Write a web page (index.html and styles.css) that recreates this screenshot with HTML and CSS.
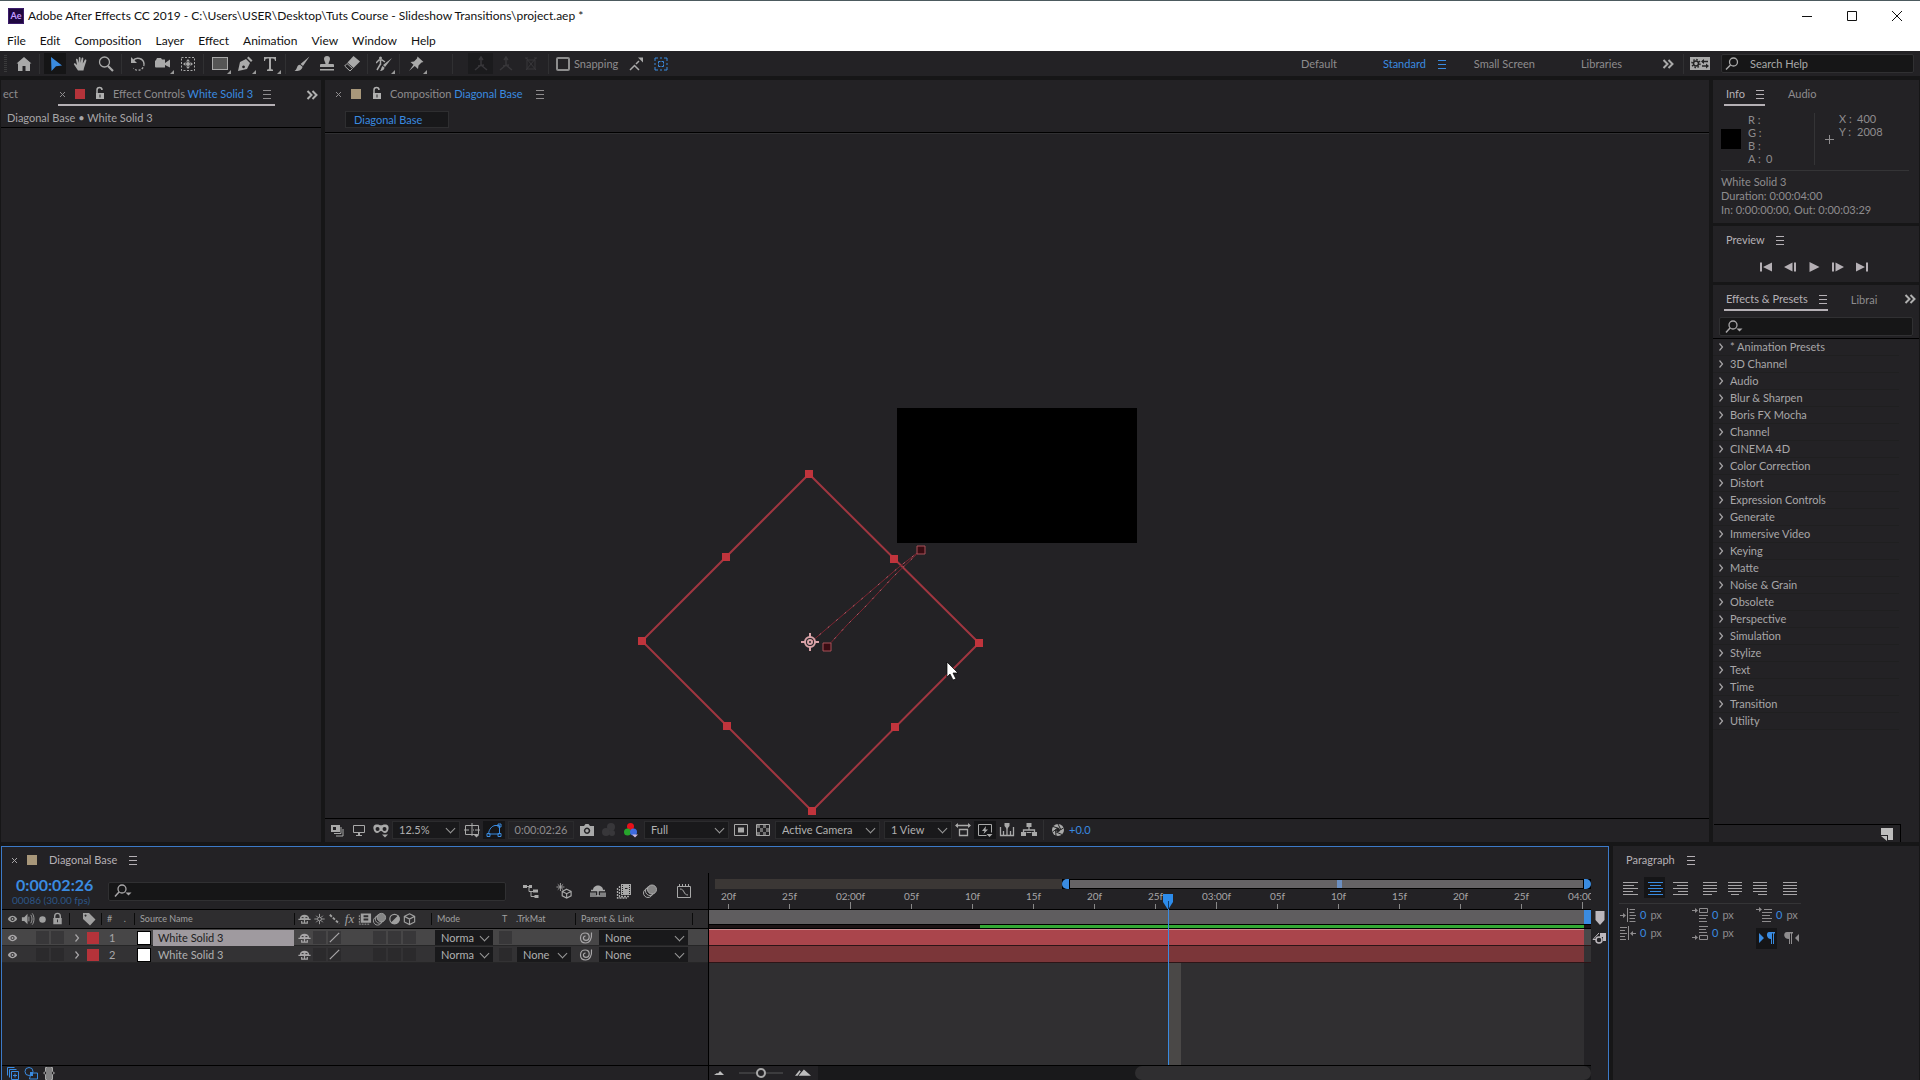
FILE: index.html
```html
<!DOCTYPE html>
<html lang="en">
<head>
<meta charset="utf-8">
<title>Adobe After Effects CC 2019</title>
<link rel="stylesheet" href="styles.css">
</head>
<body>
<svg class="sprite" aria-hidden="true">
  <symbol id="menu" viewBox="0 0 16 16"><path d="M4 4.5h8M4 8.5h8M4 12.5h8" stroke="currentColor"/></symbol>
  <symbol id="more" viewBox="0 0 16 16"><path d="M3.500 4l4 4-4 4M8.500 4l4 4-4 4" fill="none" stroke="currentColor" stroke-width="2"/></symbol>
  <symbol id="close" viewBox="0 0 16 16"><path d="M6 6l5 5M11 6l-5 5" stroke="currentColor"/></symbol>
  <symbol id="unlock" viewBox="0 0 16 16"><path d="M5 7V4a2.500 2.500 0 0 1 5 0" fill="none" stroke="currentColor" stroke-width="1.500"/><path fill-rule="evenodd" d="M4 7h8v6H4zM7.500 8.500v3h1v-3z"/></symbol>
  <symbol id="lock" viewBox="0 0 16 16"><path d="M5 8V5a3 3 0 0 1 6 0v3" fill="none" stroke="currentColor" stroke-width="1.500"/><path fill-rule="evenodd" d="M3.500 7h9v6.500h-9zM7.500 8.500v3h1v-3z"/></symbol>
  <symbol id="home" viewBox="0 0 16 16"><path d="M8 1l7.500 6.500H14V15H9.500v-5h-3v5H2V7.500H.5z"/></symbol>
  <symbol id="select" viewBox="0 0 16 16"><path d="M3 1l11 8.500-6 .8L3.500 15z"/></symbol>
  <symbol id="hand" viewBox="0 0 16 16"><path d="M5 14.500L1 8.500c-.6-1 .8-1.800 1.600-.8L4 9 3 3.800c-.2-1.200 1.400-1.500 1.700-.3L5.800 7V2c0-1.200 1.700-1.200 1.700 0v5L8.600 2.300c.3-1.200 1.900-.8 1.700.4L9.800 7.500l1.900-3.400c.6-1 2-.3 1.600.8L11 12l-.5 2.500z"/></symbol>
  <symbol id="zoom" viewBox="0 0 16 16"><circle cx="6.500" cy="6" r="5" fill="none" stroke="currentColor" stroke-width="1.300"/><path d="M10 10l5 5" stroke="currentColor" stroke-width="2.200"/></symbol>
  <symbol id="rotate" viewBox="0 0 16 16"><path d="M3 5a6 6 0 0 1 11 3" fill="none" stroke="currentColor" stroke-width="1.500"/><path d="M14 8a6 6 0 0 1-10.500 4.200" fill="none" stroke="currentColor" stroke-width="1.300" stroke-dasharray="2 1.500"/><path d="M1 1v6h6z"/></symbol>
  <symbol id="camera" viewBox="0 0 16 16"><path d="M1 4l1-2h4l1 1.500h3V7l5-3.500v8L10 9v2.500H1a1 1 0 0 1-1-1V5z"/></symbol>
  <symbol id="anchor" viewBox="0 0 16 16"><rect x="1.500" y="1.500" width="13" height="13" fill="none" stroke="currentColor" stroke-dasharray="2 1.500"/><path d="M8 3l2 2.500H6zM8 13l2-2.500H6zM3 8l2.500-2v4zM13 8l-2.500-2v4z"/><circle cx="8" cy="8" r="2"/></symbol>
  <symbol id="rect" viewBox="0 0 16 16"><rect x=".5" y="1.500" width="15" height="12" fill="#555" stroke="currentColor"/></symbol>
  <symbol id="pen" viewBox="0 0 16 16"><path fill-rule="evenodd" d="M1 15l2-9 6-3 4 4-3 6-9 2zM6.500 9.500a1.400 1.400 0 1 0 .1 0z"/><path d="M10 2l1.500-1.500 4 4L14 6z"/></symbol>
  <symbol id="type" viewBox="0 0 16 16"><path d="M2 1h12v4h-1c-.3-1.800-.8-2.500-2.500-2.500H9V12c0 1.200.5 1.500 2 1.600V15H5v-1.400c1.500-.1 2-.4 2-1.600V2.500H5.500C3.800 2.500 3.300 3.200 3 5H2z"/></symbol>
  <symbol id="brush" viewBox="0 0 16 16"><path d="M15.500.5L9 10 6.500 8zM6 8.800l2.500 2C8.300 14 4.500 15.500.5 15c2-1.400 2-2.500 2.700-4C3.700 9.600 4.800 8.700 6 8.800z"/></symbol>
  <symbol id="stamp" viewBox="0 0 16 16"><path d="M8 0a3 3 0 0 1 3 3c0 2-1.500 3-1.500 5H14a1 1 0 0 1 1 1v2H1V9a1 1 0 0 1 1-1h4.500c0-2-1.500-3-1.500-5a3 3 0 0 1 3-3zM1 13h14v1.500H1z"/></symbol>
  <symbol id="eraser" viewBox="0 0 16 16"><path d="M9.500 0L16 5.500 9.500 12 3.500 6.500z"/><path d="M3 7.500L8.500 12.500 6 15 .7 10z" fill="none" stroke="currentColor"/></symbol>
  <symbol id="roto" viewBox="0 0 16 16"><path d="M16 2L9 11 7 9zM6.500 10l2 1.500c0 2-2 3.500-4.500 3.500 1-1 1.500-4 2.500-5z"/><circle cx="4.500" cy="2" r="1.500"/><path d="M0 7l3-3h3l3 2M4.500 4v5M4.500 8L1 14" fill="none" stroke="currentColor" stroke-width="1.500"/></symbol>
  <symbol id="pin" viewBox="0 0 16 16"><path d="M9.500.5L15.500 6l-2 .5-3 3L10 13l-3.200-3L1 15l4.500-6.200L2.500 6 6 5.500l3-3z"/></symbol>
  <symbol id="axis" viewBox="0 0 16 16"><path d="M8 2v7L2 14M8 9l6 5M6 4l2-3 2 3M5 10l6-1" fill="none" stroke="currentColor" stroke-width="1.500"/></symbol>
  <symbol id="axisbox" viewBox="0 0 16 16"><path d="M3 2l10 12M3 14L13 2M4 4v9h8V4zM2 2h3M11 2h3" fill="none" stroke="currentColor"/></symbol>
  <symbol id="snap" viewBox="0 0 16 16"><path d="M2 14l4.500-4.500L11 14M8 8l3-3" fill="none" stroke="currentColor" stroke-width="1.500"/><path d="M10 1.500h5v5z"/></symbol>
  <symbol id="snapbox" viewBox="0 0 16 16"><path d="M2 5V2h3M11 2h3v3M14 11v3h-3M5 14H2v-3M7 2h2M7 14h2M2 7v2M14 7v2" fill="none" stroke="currentColor"/><path d="M5.500 7.500v-2h2M8.500 5.500h2v2M10.500 8.500v2h-2M7.500 10.500h-2v-2" fill="none" stroke="currentColor"/></symbol>
  <symbol id="settings" viewBox="0 0 20 14"><path d="M0 0h20v13H0z"/><circle cx="6" cy="6.500" r="2.500" fill="none" stroke="#232324" stroke-width="1.500"/><circle cx="6" cy="6.500" r="4" fill="none" stroke="#232324" stroke-width="1.500" stroke-dasharray="1.500 1.600"/><path d="M12 4.500h6M12 9h6" stroke="#232324" stroke-width="1.500"/><path d="M14 2v5l-3-2.500zM16 6.500v5L19 9z" fill="#232324"/></symbol>
  <symbol id="find" viewBox="0 0 16 16"><circle cx="9.500" cy="6" r="4" fill="none" stroke="currentColor" stroke-width="1.300"/><path d="M6.500 9L2 13.500" stroke="currentColor" stroke-width="1.500"/></symbol>
  <symbol id="finddrop" viewBox="0 0 18 16"><circle cx="8" cy="6" r="4" fill="none" stroke="currentColor" stroke-width="1.300"/><path d="M5 9L1 13.500" stroke="currentColor" stroke-width="1.500"/><path d="M11.500 9.500h6l-3 3z"/></symbol>
  <symbol id="first" viewBox="0 0 16 16"><path d="M2 3.500h2v9H2zM14 3.500v9L5 8z"/></symbol>
  <symbol id="back" viewBox="0 0 16 16"><path d="M12 3.500h2v9h-2zM10.500 3.500v9L2 8z"/></symbol>
  <symbol id="play" viewBox="0 0 16 16"><path d="M3.500 3l10 5-10 5z"/></symbol>
  <symbol id="fwd" viewBox="0 0 16 16"><path d="M2 3.500h2v9H2zM5.500 3.500v9L14 8z"/></symbol>
  <symbol id="last" viewBox="0 0 16 16"><path d="M12 3.500h2v9h-2zM2 3.500v9L11 8z"/></symbol>
  <symbol id="chev" viewBox="0 0 16 16"><path d="M6.500 4.500L9.500 8l-3 3.500" fill="none" stroke="currentColor" stroke-width="1.200"/></symbol>
  <symbol id="note" viewBox="0 0 16 16"><path d="M2 2h12v12H9V9H2z"/><path d="M2 10h6v5z"/></symbol>
  <symbol id="layers" viewBox="0 0 16 16"><path fill-rule="evenodd" d="M2 3h9v7H2zM4 5v3h3V5z"/><path d="M12 5v6.500H5M14 7v7H7" fill="none" stroke="currentColor"/></symbol>
  <symbol id="monitor" viewBox="0 0 16 16"><path d="M2.500 3.500h11v7h-11z" fill="none" stroke="currentColor"/><path d="M7 11h2v2h2v1H5v-1h2z"/></symbol>
  <symbol id="mask" viewBox="0 0 16 16"><path fill-rule="evenodd" d="M4 2.500c2 0 3 .8 4 .8s2-.8 4-.8c3 0 4 2 3.500 4.500C15 9.500 13.500 11 12 11c-2 0-2.500-2-4-2s-2 2-4 2c-1.500 0-3-1.500-3.500-4C0 4.500 1 2.500 4 2.500zM4.500 5a2 2 0 1 0 .1 4 2 2 0 0 0-.1-4zM11.500 5a2 2 0 1 0 .1 4 2 2 0 0 0-.1-4z"/><path d="M9 12.500h6l-3 3z"/></symbol>
  <symbol id="grid" viewBox="0 0 16 16"><path d="M1.500 3.500h13v9h-13zM8 1v6M8 9v5M0 8h5M7 8h3M11 8h5" fill="none" stroke="currentColor"/><path d="M10 13h5l-2.500 2.500z"/></symbol>
  <symbol id="shape" viewBox="0 0 16 16"><path d="M2.500 12C3 7 6 4 9 3.500h4.500V12zM1 11.500h3v3H1zM12 2h3v3h-3zM12 11.500h3v3h-3z" fill="none" stroke="currentColor"/></symbol>
  <symbol id="snapshot" viewBox="0 0 16 16"><path fill-rule="evenodd" d="M1 4h4l1.500-2h3L11 4h4v10H1zM8 5.500a3.200 3.200 0 1 0 .1 0z"/><circle cx="8" cy="8.700" r="1.700"/></symbol>
  <symbol id="ghost" viewBox="0 0 16 16"><circle cx="10" cy="5" r="4"/><circle cx="5" cy="10" r="4"/><circle cx="11" cy="11" r="3"/></symbol>
  <symbol id="rgb" viewBox="0 0 16 16"><circle cx="7.500" cy="4.500" r="3.500" fill="#e8101a"/><circle cx="4.500" cy="10" r="3.500" fill="#27a52c"/><circle cx="10.500" cy="10" r="3.500" fill="#3f6be0"/><path d="M9 12.500h6l-3 3z" fill="#c9b8e0"/></symbol>
  <symbol id="safe" viewBox="0 0 16 16"><path d="M1.500 2.500h13v11h-13z" fill="none" stroke="currentColor"/><path d="M5 5.500h6v5H5z"/></symbol>
  <symbol id="checker" viewBox="0 0 16 16"><path d="M1.500 2.500h13v11h-13z" fill="none" stroke="currentColor"/><path d="M2 3h3v3H2zM8 3h3v3H8zM5 6h3v4H5zM11 6h3v4h-3zM2 10h3v3H2zM8 10h3v3H8z" opacity=".6"/></symbol>
  <symbol id="pixel" viewBox="0 0 16 16"><path d="M1 3.500h14M4.500 7.500h8v6h-8z" fill="none" stroke="currentColor" stroke-width="1.300"/><path d="M0 3.500L3 1v5zM16 3.500L13 1v5z"/></symbol>
  <symbol id="fast" viewBox="0 0 16 16"><path d="M9.500 13.500h-8v-11h13v8" fill="none" stroke="currentColor"/><path d="M9 4L5 9h2.500L6.500 12 11 7.500H8.500zM9.500 12h6l-3 3z"/></symbol>
  <symbol id="chart" viewBox="0 0 16 16"><path d="M1.500 5v8.500h13V5M4.500 9v4M11.500 9v4M8 6v7" fill="none" stroke="currentColor" stroke-width="1.300"/><path d="M5.500 1h5v3L8 7 5.500 4z"/></symbol>
  <symbol id="tree" viewBox="0 0 16 16"><path d="M5.500 1h5v4h-5zM0 10h5v4H0zM11 10h5v4h-5zM5.500 10h5v1h-5z"/><path d="M8 5v3M2.500 10V8h11v2" fill="none" stroke="currentColor" stroke-width="1.300"/></symbol>
  <symbol id="aperture" viewBox="0 0 16 16"><circle cx="8" cy="8" r="6"/><path d="M8 2l3 6M13.500 6l-6 3.500M12 12.500L6 10M6 14l-.5-6.500M2.500 10L8 6M3 4.500l6 2" stroke="#232324" stroke-width="1"/><circle cx="8" cy="8" r="2" fill="#232324"/></symbol>
  <symbol id="eye" viewBox="0 0 16 16"><path fill-rule="evenodd" d="M3 8c2.500-4.500 7.500-4.500 10 0-2.500 4.500-7.500 4.500-10 0zM8 5.800a2.200 2.200 0 1 0 .1 0z"/><circle cx="8" cy="8" r="1"/></symbol>
  <symbol id="sound" viewBox="0 0 16 16"><path d="M2 6h2.500L8 2.500v11L4.500 10H2z"/><path d="M9.500 5.500v5M11.500 3.500c1.800 2.500 1.800 6.500 0 9M13 2c2.500 3 2.500 9 0 12" fill="none" stroke="currentColor"/></symbol>
  <symbol id="dot" viewBox="0 0 16 16"><circle cx="8" cy="8.500" r="3.500"/></symbol>
  <symbol id="tag" viewBox="0 0 16 16"><path fill-rule="evenodd" d="M2 2h6l6.500 6.500-5.500 6L2 8zM4.500 3.500a1 1 0 1 0 .1 0z"/></symbol>
  <symbol id="shy" viewBox="0 0 16 16"><path d="M3 8c0-6 10-6 10 0z"/><path d="M1.500 8.500h13M8 6v7M5 10v2.500h6V10" fill="none" stroke="currentColor" stroke-width="1.300"/><path d="M5 6.500h2M9 6.500h2" stroke="#2c2b2d"/></symbol>
  <symbol id="star" viewBox="0 0 16 16"><circle cx="8" cy="8" r="2" fill="none" stroke="currentColor"/><path d="M8 2.500V6M8 10v3.500M2.500 8H6M10 8h3.500M4.500 4.500l2 2M9.500 9.500l2 2M11.500 4.500l-2 2M6.500 9.500l-2 2" stroke="currentColor"/></symbol>
  <symbol id="dash" viewBox="0 0 16 16"><path d="M3 3.500l10 9.500" stroke="currentColor" stroke-width="2" stroke-dasharray="3 1.500"/></symbol>
  <symbol id="slash" viewBox="0 0 16 16"><path d="M3 13L13 3" stroke="currentColor" stroke-width="1.300"/></symbol>
  <symbol id="film" viewBox="0 0 16 16"><path fill-rule="evenodd" d="M4 2h11v10H4zM7 4v2h5V4zM7 7.500v2h5v-2z"/><path d="M2.500 4v9.500H13" fill="none" stroke="currentColor" stroke-dasharray="2 1"/></symbol>
  <symbol id="films" viewBox="0 0 16 16"><path d="M5 1h10v11H5z"/><path d="M6.500 2v9M13.500 2v9" stroke="#232324" stroke-dasharray="1 1"/><path d="M9 5.500h2.500" stroke="#232324"/><path d="M3.500 3v10.500H13M1.500 5v10H11" fill="none" stroke="currentColor" stroke-width="1.300" stroke-dasharray="2 1"/></symbol>
  <symbol id="blur" viewBox="0 0 16 16"><circle cx="6" cy="10" r="4.500" fill="none" stroke="currentColor"/><circle cx="8" cy="8" r="4.500" fill="none" stroke="currentColor"/><circle cx="10" cy="6.500" r="4.500" fill="#858585" stroke="currentColor"/></symbol>
  <symbol id="adjust" viewBox="0 0 16 16"><circle cx="8" cy="8" r="5" fill="none" stroke="currentColor" stroke-width="1.300"/><path d="M12 4a5.500 5.500 0 0 1-8 8z"/></symbol>
  <symbol id="cube" viewBox="0 0 16 16"><path d="M8 2.500l5.500 2.700v6L8 14l-5.500-2.800v-6zM2.500 5.200L8 8l5.500-2.800M8 8v6" fill="none" stroke="currentColor" stroke-width="1.200"/></symbol>
  <symbol id="whip" viewBox="0 0 16 16"><path d="M13.500 2.500c.5 6-1.500 10.500-6 10.500C4 13 2.500 10.500 2.500 8c0-3.200 2.200-5 4.700-5s4 1.700 4 3.800c0 2.200-1.400 3.600-3.200 3.600-1.600 0-2.600-1-2.600-2.300S6.400 6 7.500 6.200" fill="none" stroke="currentColor" stroke-width="1.200"/></symbol>
  <symbol id="flow" viewBox="0 0 16 16"><path d="M0 3.500h8M6 3.500v5h6M8 8.500v5h4" fill="none" stroke="currentColor"/><path d="M0 2h4v3H0zM6 2h3v3H6zM10 6.500h5v3h-5zM11.500 12h4v3h-4z"/></symbol>
  <symbol id="draft" viewBox="0 0 18 18"><path d="M5 0v9M.5 4.500h9M2 1.500l6 6M8 1.500l-6 6" stroke="currentColor"/><path d="M12 7l5 2.500v5L12 17l-5-2.500v-5zM7 9.500l5 2.500 5-2.500M12 12v5" fill="none" stroke="currentColor" stroke-width="1.300"/></symbol>
  <symbol id="shyall" viewBox="0 0 16 16"><path d="M3 7c0-6 10-6 10 0z"/><path d="M1 7.500h14M8 5v8" stroke="currentColor" stroke-width="1.500"/><path d="M0 9.500h6V12h4V9.500h6V14H0z" opacity=".7"/></symbol>
  <symbol id="graph" viewBox="0 0 16 16"><path d="M1.500 3.500h13v11h-13zM3.500 1v2M6.500 1v2M9.500 1v2M12.500 1v2M4 6c5 0 3 6 8 6" fill="none" stroke="currentColor"/></symbol>
  <symbol id="toggle1" viewBox="0 0 16 16"><path d="M2.500 10.500v-8h7M4.500 12.500v-8h7M6.500 6.500h7v8h-7zM10 8.500v4M8 10.500h4" fill="none" stroke="currentColor"/></symbol>
  <symbol id="toggle2" viewBox="0 0 16 16"><circle cx="6" cy="6.500" r="4" fill="none" stroke="currentColor"/><path d="M8 8h6.500v6H6.500z" fill="none" stroke="currentColor"/><path d="M7 7h3v4H7z"/></symbol>
  <symbol id="toggle3" viewBox="0 0 16 16"><path d="M5 2h6v13H5z" opacity=".7"/><path d="M6 2.500H4.500v4L2.500 8l2 1.500v5H6M10 2.500h1.500v4l2 1.500-2 1.500v5H10" fill="none" stroke="currentColor"/></symbol>
  <symbol id="hill" viewBox="0 0 16 16"><path d="M3 10l3-2 1 .5 2-2.500 4 4z"/></symbol>
  <symbol id="hills" viewBox="0 0 18 16"><path d="M0 11l5-6 1.500 1L3 11zM4 11l6-7 8 7z"/></symbol>
  <symbol id="marker" viewBox="0 0 16 16"><path d="M3.500 1h9v9L8 15l-4.500-5z"/></symbol>
  <symbol id="keytag" viewBox="0 0 16 16"><circle cx="7" cy="10" r="3" fill="none" stroke="currentColor" stroke-width="1.500"/><path d="M8 3h6v8h-3V7H8z"/><path d="M1 9.500L7 3M1 9.500h3" fill="none" stroke="currentColor"/></symbol>
  <symbol id="al" viewBox="0 0 16 16"><path d="M1 2.500h15M1 5.500h11M1 8.500h15M1 11.500h10M1 14.500h15" stroke="currentColor"/></symbol>
  <symbol id="ac" viewBox="0 0 16 16"><path d="M1 2.500h15M3 5.500h11M1 8.500h15M3 11.500h11M1 14.500h15" stroke="currentColor"/></symbol>
  <symbol id="ar" viewBox="0 0 16 16"><path d="M1 2.500h15M5 5.500h11M1 8.500h15M6 11.500h10M1 14.500h15" stroke="currentColor"/></symbol>
  <symbol id="jl" viewBox="0 0 16 16"><path d="M1 2.500h14M1 5.500h14M1 8.500h14M1 11.500h14M1 14.500h9" stroke="currentColor"/></symbol>
  <symbol id="jc" viewBox="0 0 16 16"><path d="M1 2.500h14M1 5.500h14M1 8.500h14M1 11.500h14M4 14.500h8" stroke="currentColor"/></symbol>
  <symbol id="jr" viewBox="0 0 16 16"><path d="M1 2.500h14M1 5.500h14M1 8.500h14M1 11.500h14M6 14.500h9" stroke="currentColor"/></symbol>
  <symbol id="ja" viewBox="0 0 16 16"><path d="M1 2.500h14M1 5.500h14M1 8.500h14M1 11.500h14M1 14.500h14" stroke="currentColor"/></symbol>
  <symbol id="inl" viewBox="0 0 16 16"><path d="M7.500 1v14M9.500 2.500H15M9.500 5.500h5M9.500 8.500H16M9.500 11.500H15M9.500 14.500h6M0 8.500h5" stroke="currentColor"/><path d="M3 6l3 2.500L3 11z"/></symbol>
  <symbol id="inr" viewBox="0 0 16 16"><path d="M8.500 1v14M0 2.500h7M0 5.500h5M0 8.500h7M0 11.500h5M0 14.500h6M11 8.500h5" stroke="currentColor"/><path d="M13 6l-3 2.500L13 11z"/></symbol>
  <symbol id="inb" viewBox="0 0 16 16"><path d="M7.500 1.500h8v4h-8zM7 8.500h9M7 11.500h7M7 14.500h8M0 3.500h5" fill="none" stroke="currentColor"/><path d="M3 1l3 2.500L3 6z"/></symbol>
  <symbol id="ina" viewBox="0 0 16 16"><path d="M7.500 10.500h8v4h-8zM7 1.500h9M7 4.500h7M7 7.500h8M0 12.500h5" fill="none" stroke="currentColor"/><path d="M3 10l3 2.500L3 15z"/></symbol>
  <symbol id="inf" viewBox="0 0 16 16"><path d="M8 2.500h8M6 5.500h10M6 8.500h8M6 11.500h10M6 14.500h9M0 2.500h4" fill="none" stroke="currentColor"/><path d="M3 0l3 2.500L3 5z"/></symbol>
  <symbol id="ltr" viewBox="0 0 16 16"><path d="M0 3l5 5-5 5zM10 2h6v1.500h-1V14h-1V3.500h-1V14h-1V9C7 9 7 2 10 2z"/></symbol>
  <symbol id="rtl" viewBox="0 0 16 16"><path d="M16 4l-4 4 4 4zM4 2h6v1.500H9V14H8V3.500H7V14H6V9C0 9 0 2 4 2z"/></symbol>
</svg>

<header class="titlebar">
  <div class="title-row">
    <svg class="logo" viewBox="0 0 16 16"><path d="M0 0h16v16H0z" fill="#1f0740"/><path d="M.5.5h15v15H.5z" fill="none" stroke="#3b1c6b"/><text x="8" y="11" text-anchor="middle">Ae</text></svg>
    <span>Adobe After Effects CC 2019 - C:\Users\USER\Desktop\Tuts Course - Slideshow Transitions\project.aep *</span>
    <div class="win-buttons">
      <button aria-label="Minimize"><svg viewBox="0 0 12 12"><path d="M1 6.500h10"/></svg></button>
      <button aria-label="Maximize"><svg viewBox="0 0 12 12"><path d="M1.500 1.500h9v9h-9z"/></svg></button>
      <button aria-label="Close"><svg viewBox="0 0 12 12"><path d="M1 1l10 10M11 1L1 11"/></svg></button>
    </div>
  </div>
  <nav class="menubar">
    <button>File</button><button>Edit</button><button>Composition</button><button>Layer</button><button>Effect</button><button>Animation</button><button>View</button><button>Window</button><button>Help</button>
  </nav>
</header>

<div class="toolbar">
  <span class="grip"></span>
  <button class="tool" aria-label="Home"><svg class="icon"><use href="#home"/></svg></button><i class="sep"></i>
  <button class="tool active" aria-label="Selection"><svg class="icon"><use href="#select"/></svg></button>
  <button class="tool" aria-label="Hand"><svg class="icon"><use href="#hand"/></svg></button>
  <button class="tool" aria-label="Zoom"><svg class="icon"><use href="#zoom"/></svg></button><i class="sep"></i>
  <button class="tool" aria-label="Rotation"><svg class="icon"><use href="#rotate"/></svg></button>
  <button class="tool more" aria-label="Camera"><svg class="icon"><use href="#camera"/></svg></button>
  <button class="tool" aria-label="Pan behind"><svg class="icon"><use href="#anchor"/></svg></button><i class="sep"></i>
  <button class="tool more" aria-label="Rectangle"><svg class="icon"><use href="#rect"/></svg></button>
  <button class="tool more" aria-label="Pen"><svg class="icon"><use href="#pen"/></svg></button>
  <button class="tool more" aria-label="Type"><svg class="icon"><use href="#type"/></svg></button><i class="sep"></i>
  <button class="tool" aria-label="Brush"><svg class="icon"><use href="#brush"/></svg></button>
  <button class="tool" aria-label="Clone stamp"><svg class="icon"><use href="#stamp"/></svg></button>
  <button class="tool" aria-label="Eraser"><svg class="icon"><use href="#eraser"/></svg></button><i class="sep"></i>
  <button class="tool more" aria-label="Roto brush"><svg class="icon"><use href="#roto"/></svg></button><i class="sep"></i>
  <button class="tool more" aria-label="Puppet pin"><svg class="icon"><use href="#pin"/></svg></button>
  <i class="sep wide"></i>
  <div class="axes">
    <button class="tool" aria-label="Local axis" disabled><svg class="icon"><use href="#axis"/></svg></button>
    <button class="tool" aria-label="World axis" disabled><svg class="icon"><use href="#axis"/></svg></button>
    <button class="tool" aria-label="View axis" disabled><svg class="icon"><use href="#axisbox"/></svg></button>
  </div>
  <i class="sep"></i>
  <label class="snapping"><input type="checkbox">Snapping</label>
  <button class="tool" aria-label="Snap to edges"><svg class="icon"><use href="#snap"/></svg></button>
  <button class="tool blue" aria-label="Snap to features"><svg class="icon"><use href="#snapbox"/></svg></button>
  <div class="workspaces">
    <button>Default</button>
    <button class="blue">Standard<svg class="icon"><use href="#menu"/></svg></button>
    <button>Small Screen</button>
    <button>Libraries</button>
  </div>
  <button class="tool" aria-label="More workspaces"><svg class="icon"><use href="#more"/></svg></button>
  <i class="sep"></i>
  <button class="tool" aria-label="Sync settings"><svg class="settings"><use href="#settings"/></svg></button>
  <div class="field help"><svg class="icon"><use href="#find"/></svg><input type="text" aria-label="Search Help" placeholder="Search Help"></div>
</div>

<main class="upper">
  <section class="panel effect-controls">
    <div class="tabs">
      <button class="tab cut">ect</button>
      <div class="tab current"><svg class="icon"><use href="#close"/></svg><i class="swatch red"></i><svg class="icon lockicon"><use href="#unlock"/></svg><span>Effect Controls <b>White Solid 3</b></span><svg class="icon"><use href="#menu"/></svg></div>
      <button class="overflow" aria-label="More panels"><svg class="icon"><use href="#more"/></svg></button>
    </div>
    <p class="crumb">Diagonal Base • White Solid 3</p>
  </section>

  <section class="panel composition">
    <div class="tabs">
      <div class="tab"><svg class="icon"><use href="#close"/></svg><i class="swatch tan"></i><svg class="icon lockicon"><use href="#unlock"/></svg><span>Composition <b>Diagonal Base</b></span><svg class="icon"><use href="#menu"/></svg></div>
    </div>
    <div class="subtabs"><button>Diagonal Base</button></div>
    <svg class="viewer" viewBox="325 134 1384 684">
      <path d="M897 408h240v135H897z" fill="#000"/>
      <g class="outline"><path d="M809 474L642 641l170 170 167-168z"/></g>
      <g class="handles">
        <path d="M805 470h8v8h-8zM722 553h8v8h-8zM638 637h8v8h-8zM723 722h8v8h-8zM808 807h8v8h-8zM891 723h8v8h-8zM975 639h8v8h-8zM890 555h8v8h-8z"/>
      </g>
      <g class="motion">
        <path d="M811 642L864 597 899 567 921 550M827 647L847 625 864 608 893 577 921 550"/>
        <path class="dots" d="M811 642L864 597 899 567 921 550M827 647L847 625 864 608 893 577 921 550"/>
        <path class="keys" d="M917 546h8v8h-8zM823 643h8v8h-8z"/>
      </g>
      <g class="anchorpoint"><circle cx="810" cy="642" r="5"/><circle cx="810" cy="642" r="2"/><path d="M810 633v5M810 646v5M801 642h5M814 642h5"/></g>
      <path d="M947 662v15l3-3 3 6 3-1-3-6h5z" fill="#fff" stroke="#000" stroke-width=".7"/>
    </svg>
    <div class="view-footer">
      <button class="mini" aria-label="Always preview"><svg class="icon"><use href="#layers"/></svg></button>
      <button class="mini" aria-label="Primary viewer"><svg class="icon"><use href="#monitor"/></svg></button>
      <button class="mini" aria-label="Mask"><svg class="icon"><use href="#mask"/></svg></button>
      <label class="drop w-zoom"><select aria-label="Magnification"><option>12.5%</option></select></label>
      <button class="mini" aria-label="Guides"><svg class="icon"><use href="#grid"/></svg></button>
      <button class="mini blue on" aria-label="Mask visibility"><svg class="icon"><use href="#shape"/></svg></button>
      <button class="timebox">0:00:02:26</button>
      <button class="mini" aria-label="Take snapshot"><svg class="icon"><use href="#snapshot"/></svg></button>
      <button class="mini" aria-label="Show snapshot" disabled><svg class="icon"><use href="#ghost"/></svg></button>
      <button class="mini" aria-label="Channels"><svg class="icon"><use href="#rgb"/></svg></button>
      <label class="drop w-res"><select aria-label="Resolution"><option>Full</option></select></label>
      <button class="mini" aria-label="Region of interest"><svg class="icon"><use href="#safe"/></svg></button>
      <button class="mini" aria-label="Transparency grid"><svg class="icon"><use href="#checker"/></svg></button>
      <label class="drop w-cam"><select aria-label="3D view"><option>Active Camera</option></select></label>
      <label class="drop w-view"><select aria-label="View layout"><option>1 View</option></select></label>
      <button class="mini" aria-label="Pixel aspect ratio"><svg class="icon"><use href="#pixel"/></svg></button>
      <button class="mini on" aria-label="Fast previews"><svg class="icon"><use href="#fast"/></svg></button>
      <button class="mini" aria-label="Timeline"><svg class="icon"><use href="#chart"/></svg></button>
      <button class="mini" aria-label="Flowchart"><svg class="icon"><use href="#tree"/></svg></button>
      <i class="sep"></i>
      <button class="mini" aria-label="Reset exposure"><svg class="icon"><use href="#aperture"/></svg></button>
      <span class="blue">+0.0</span>
    </div>
  </section>

  <aside class="side">
    <section class="panel info">
      <div class="tabs">
        <div class="tab current">Info<svg class="icon"><use href="#menu"/></svg></div>
        <button class="tab">Audio</button>
      </div>
      <div class="readout">
        <i class="black"></i>
        <dl><dt>R :</dt><dd></dd><dt>G :</dt><dd></dd><dt>B :</dt><dd></dd><dt>A :</dt><dd>0</dd></dl>
        <svg class="icon cross" viewBox="0 0 16 16"><path d="M8.500 4v9M4 8.500h9" stroke="currentColor"/></svg>
        <dl><dt>X :</dt><dd>400</dd><dt>Y :</dt><dd>2008</dd></dl>
      </div>
      <p class="summary">White Solid 3<br>Duration: 0:00:04:00<br>In: 0:00:00:00, Out: 0:00:03:29</p>
    </section>
    <section class="panel preview">
      <div class="tabs"><div class="tab">Preview<svg class="icon"><use href="#menu"/></svg></div></div>
      <div class="transport">
        <button aria-label="First frame"><svg class="icon"><use href="#first"/></svg></button>
        <button aria-label="Previous frame"><svg class="icon"><use href="#back"/></svg></button>
        <button aria-label="Play"><svg class="icon"><use href="#play"/></svg></button>
        <button aria-label="Next frame"><svg class="icon"><use href="#fwd"/></svg></button>
        <button aria-label="Last frame"><svg class="icon"><use href="#last"/></svg></button>
      </div>
    </section>
    <section class="panel effects">
      <div class="tabs">
        <div class="tab current">Effects &amp; Presets<svg class="icon"><use href="#menu"/></svg></div>
        <button class="tab">Librai</button>
        <button class="overflow" aria-label="More panels"><svg class="icon"><use href="#more"/></svg></button>
      </div>
      <div class="field"><svg class="icon find"><use href="#finddrop"/></svg><input type="text" aria-label="Search effects"></div>
      <ul class="tree">
        <li><svg class="icon"><use href="#chev"/></svg>* Animation Presets</li>
        <li><svg class="icon"><use href="#chev"/></svg>3D Channel</li>
        <li><svg class="icon"><use href="#chev"/></svg>Audio</li>
        <li><svg class="icon"><use href="#chev"/></svg>Blur &amp; Sharpen</li>
        <li><svg class="icon"><use href="#chev"/></svg>Boris FX Mocha</li>
        <li><svg class="icon"><use href="#chev"/></svg>Channel</li>
        <li><svg class="icon"><use href="#chev"/></svg>CINEMA 4D</li>
        <li><svg class="icon"><use href="#chev"/></svg>Color Correction</li>
        <li><svg class="icon"><use href="#chev"/></svg>Distort</li>
        <li><svg class="icon"><use href="#chev"/></svg>Expression Controls</li>
        <li><svg class="icon"><use href="#chev"/></svg>Generate</li>
        <li><svg class="icon"><use href="#chev"/></svg>Immersive Video</li>
        <li><svg class="icon"><use href="#chev"/></svg>Keying</li>
        <li><svg class="icon"><use href="#chev"/></svg>Matte</li>
        <li><svg class="icon"><use href="#chev"/></svg>Noise &amp; Grain</li>
        <li><svg class="icon"><use href="#chev"/></svg>Obsolete</li>
        <li><svg class="icon"><use href="#chev"/></svg>Perspective</li>
        <li><svg class="icon"><use href="#chev"/></svg>Simulation</li>
        <li><svg class="icon"><use href="#chev"/></svg>Stylize</li>
        <li><svg class="icon"><use href="#chev"/></svg>Text</li>
        <li><svg class="icon"><use href="#chev"/></svg>Time</li>
        <li><svg class="icon"><use href="#chev"/></svg>Transition</li>
        <li><svg class="icon"><use href="#chev"/></svg>Utility</li>
      </ul>
      <div class="tree-footer"><button aria-label="New preset"><svg class="icon"><use href="#note"/></svg></button></div>
    </section>
  </aside>
</main>

<div class="lower">
  <section class="panel timeline">
    <div class="tabs">
      <div class="tab"><svg class="icon"><use href="#close"/></svg><i class="swatch tan"></i><span>Diagonal Base</span><svg class="icon"><use href="#menu"/></svg></div>
    </div>
    <div class="tl-body">
      <div class="layers">
        <div class="tl-head">
          <div class="clock"><strong>0:00:02:26</strong><span>00086 (30.00 fps)</span></div>
          <div class="field"><svg class="icon find"><use href="#finddrop"/></svg><input type="text" aria-label="Search layers"></div>
          <div class="tl-tools">
            <button aria-label="Mini-flowchart"><svg class="icon"><use href="#flow"/></svg></button>
            <button aria-label="Draft 3D"><svg class="icon"><use href="#draft"/></svg></button>
            <button aria-label="Hide shy layers"><svg class="icon"><use href="#shyall"/></svg></button>
            <button aria-label="Frame blending"><svg class="icon"><use href="#films"/></svg></button>
            <button aria-label="Motion blur"><svg class="icon"><use href="#blur"/></svg></button>
            <button aria-label="Graph editor"><svg class="icon"><use href="#graph"/></svg></button>
          </div>
        </div>
        <table>
          <colgroup><col class="c-av"><col class="c-label"><col class="c-num"><col class="c-name"><col class="c-switch"><col class="c-mode"><col class="c-t"><col class="c-trk"><col class="c-parent"><col></colgroup>
          <thead><tr>
            <th><div class="slots"><svg class="icon"><use href="#eye"/></svg><svg class="icon"><use href="#sound"/></svg><svg class="icon"><use href="#dot"/></svg><svg class="icon"><use href="#lock"/></svg></div></th>
            <th class="rule"><div class="label-head"><svg class="icon"><use href="#tag"/></svg></div></th>
            <th class="rule num-head"># &nbsp; &nbsp; .</th>
            <th class="rule">Source Name</th>
            <th class="rule"><div class="slots"><svg class="icon"><use href="#shy"/></svg><svg class="icon"><use href="#star"/></svg><svg class="icon"><use href="#dash"/></svg><em>fx</em><svg class="icon"><use href="#film"/></svg><svg class="icon"><use href="#blur"/></svg><svg class="icon"><use href="#adjust"/></svg><svg class="icon"><use href="#cube"/></svg></div></th>
            <th class="rule">Mode</th><th class="t-head">T</th><th class="trk-head">.TrkMat</th><th class="rule">Parent &amp; Link</th><th class="rule"></th>
          </tr></thead>
          <tbody>
            <tr class="chosen">
              <td><div class="slots"><svg class="icon"><use href="#eye"/></svg><i></i><i class="cell"></i><i class="cell"></i></div></td>
              <td><div class="label-cell"><svg class="icon"><use href="#chev"/></svg><i class="label"></i></div></td>
              <td class="num">1</td>
              <td><div class="name"><i class="white"></i><span>White Solid 3</span></div></td>
              <td><div class="slots"><svg class="icon"><use href="#shy"/></svg><i class="cell"></i><i class="cell"><svg class="icon"><use href="#slash"/></svg></i><i></i><i></i><i class="cell"></i><i class="cell"></i><i class="cell"></i></div></td>
              <td><label class="drop w-mode"><select aria-label="Mode"><option>Norma</option></select></label></td>
              <td><i class="cell"></i></td><td></td>
              <td><div class="parent"><svg class="icon"><use href="#whip"/></svg><label class="drop"><select aria-label="Parent"><option>None</option></select></label></div></td><td></td>
            </tr>
            <tr>
              <td><div class="slots"><svg class="icon"><use href="#eye"/></svg><i></i><i class="cell"></i><i class="cell"></i></div></td>
              <td><div class="label-cell"><svg class="icon"><use href="#chev"/></svg><i class="label"></i></div></td>
              <td class="num">2</td>
              <td><div class="name"><i class="white"></i><span>White Solid 3</span></div></td>
              <td><div class="slots"><svg class="icon"><use href="#shy"/></svg><i class="cell"></i><i class="cell"><svg class="icon"><use href="#slash"/></svg></i><i></i><i></i><i class="cell"></i><i class="cell"></i><i class="cell"></i></div></td>
              <td><label class="drop w-mode"><select aria-label="Mode"><option>Norma</option></select></label></td>
              <td><i class="cell"></i></td>
              <td><label class="drop w-trk"><select aria-label="Track matte"><option>None</option></select></label></td>
              <td><div class="parent"><svg class="icon"><use href="#whip"/></svg><label class="drop"><select aria-label="Parent"><option>None</option></select></label></div></td><td></td>
            </tr>
          </tbody>
        </table>
        <div class="tl-footer blue">
          <button aria-label="Layer switches"><svg class="icon"><use href="#toggle1"/></svg></button>
          <button aria-label="Transfer controls"><svg class="icon"><use href="#toggle2"/></svg></button>
          <button class="gray" aria-label="In and out"><svg class="icon"><use href="#toggle3"/></svg></button>
        </div>
      </div>
      <div class="tracks">
        <div class="navigator"><i class="before"></i><i class="knob left"></i><i class="range"></i><i class="knob right"></i></div>
        <div class="ruler">
          <span>20f</span><span>25f</span><span class="sec">02:00f</span><span>05f</span><span>10f</span><span>15f</span><span>20f</span><span>25f</span><span class="sec">03:00f</span><span>05f</span><span>10f</span><span>15f</span><span>20f</span><span>25f</span><span class="sec">04:00f</span>
        </div>
        <div class="workarea"><i></i></div>
        <div class="cache"><i></i></div>
        <div class="bar one"><i></i></div>
        <div class="bar two"><i></i></div>
        <div class="empty"><i></i></div>
        <div class="tl-footer zoomer">
          <svg class="icon"><use href="#hill"/></svg><input type="range" aria-label="Timeline zoom" value="50"><svg class="icon"><use href="#hills"/></svg>
          <div class="scroll"><i></i></div>
        </div>
        <div class="playhead"><svg viewBox="0 0 12 15"><path d="M1 0h10v8l-4.500 7h-1L1 8z" fill="#2d8ceb"/><path d="M6.500 7v8" stroke="#123a66"/></svg></div>
      </div>
      <div class="gutter"><svg class="icon"><use href="#marker"/></svg><svg class="icon"><use href="#keytag"/></svg></div>
    </div>
  </section>

  <section class="panel paragraph">
    <div class="tabs"><div class="tab">Paragraph<svg class="icon"><use href="#menu"/></svg></div></div>
    <div class="aligns">
      <div><button aria-label="Left"><svg class="icon"><use href="#al"/></svg></button><button class="on blue" aria-label="Center"><svg class="icon"><use href="#ac"/></svg></button><button aria-label="Right"><svg class="icon"><use href="#ar"/></svg></button></div>
      <div><button aria-label="Justify left"><svg class="icon"><use href="#jl"/></svg></button><button aria-label="Justify center"><svg class="icon"><use href="#jc"/></svg></button><button aria-label="Justify right"><svg class="icon"><use href="#jr"/></svg></button></div>
      <div><button aria-label="Justify all"><svg class="icon"><use href="#ja"/></svg></button></div>
    </div>
    <div class="indents">
      <div><svg class="icon"><use href="#inl"/></svg><b>0</b> px</div>
      <div><svg class="icon"><use href="#inb"/></svg><b>0</b> px</div>
      <div><svg class="icon"><use href="#inf"/></svg><b>0</b> px</div>
      <div><svg class="icon"><use href="#inr"/></svg><b>0</b> px</div>
      <div><svg class="icon"><use href="#ina"/></svg><b>0</b> px</div>
      <div class="dirs"><button class="on blue" aria-label="Left to right"><svg class="icon"><use href="#ltr"/></svg></button><button aria-label="Right to left"><svg class="icon"><use href="#rtl"/></svg></button></div>
    </div>
  </section>
</div>
</body>
</html>
```
FILE: styles.css
```css
:root {
  --panel: #232225;
  --gap: #161617;
  --text: #a8a6a8;
  --dim: #8e8c8e;
  --blue: #3a8be0;
}
* { box-sizing: border-box; }
html, body { height: 100%; }
body {
  margin: 0;
  display: flex;
  flex-direction: column;
  overflow: hidden;
  background: var(--gap);
  color: var(--text);
  font: 11px/16px Lato, "Noto Sans", sans-serif;
}
button, input, select { font: inherit; color: inherit; background: none; border: 0; padding: 0; margin: 0; min-width: 0; }
button { display: flex; align-items: center; justify-content: center; white-space: nowrap; }
p, ul, dl, dd { margin: 0; padding: 0; }
.sprite { display: none; }
.icon { width: 16px; height: 16px; flex: none; fill: currentColor; }
.blue { color: var(--blue); }
.panel { background: var(--panel); min-width: 0; display: flex; flex-direction: column; }

/* Window title and menus */
.titlebar { background: #fff; color: #111; border-top: 1px solid #4c5a5e; font-size: 12px; }
.title-row { display: flex; align-items: center; height: 30px; padding: 0 11px 0 8px; gap: 4px; }
.logo { width: 16px; height: 16px; }
.logo text { font: bold 9px Lato, sans-serif; fill: #c29bff; }
.win-buttons { margin-left: auto; display: flex; gap: 21px; }
.win-buttons button { width: 24px; height: 24px; }
.win-buttons svg { width: 12px; height: 12px; fill: none; stroke: #111; }
.menubar { display: flex; gap: 14px; height: 20px; padding-left: 7px; }

/* Toolbar */
.toolbar { display: flex; align-items: center; height: 25px; margin-bottom: 4px; background: var(--panel); color: #a9a9a9; }
.grip { width: 3px; height: 17px; margin: 0 4px; background: repeating-linear-gradient(#3a3a3b 0 1px, transparent 1px 2px); }
.tool { position: relative; width: 25px; height: 21px; flex: none; }
.tool.active { background: #151516; color: var(--blue); box-shadow: inset 1px 0 var(--panel), inset -2px 0 var(--panel); }
.tool.more::after { content: ""; position: absolute; right: 1px; bottom: 0; border: 2px solid transparent; border-right-color: #999; border-bottom-color: #999; }
.tool:disabled, .mini:disabled { color: #38373a; }
.sep { flex: none; width: 1px; height: 20px; margin: 0 3px; background: #303032; }
.sep.wide { margin-left: 24px; }
.axes { display: flex; margin: 0 2px 0 12px; }
.axes .tool:first-child { background: #1b1b1d; }
.snapping { display: flex; align-items: center; gap: 4px; margin-left: 4px; color: var(--dim); margin-right: 5px; }
.snapping input { appearance: none; width: 14px; height: 14px; border: 2px solid #8d8d8d; border-radius: 2px; }
.workspaces { margin-left: auto; display: flex; color: var(--dim); gap: 46px; margin-right: 33px; }
.workspaces button { gap: 8px; }
.workspaces .blue { color: var(--blue); margin-right: -26px; }
.workspaces button:nth-child(2) .icon { margin-right: 4px; }
.settings { width: 20px; height: 14px; fill: currentColor; }
.field { display: flex; align-items: center; height: 19px; background: #161617; border: 1px solid #303032; border-radius: 2px; }
.field input { flex: 1; outline: 0; }
.field input::placeholder { color: #a9a9a9; opacity: 1; }
.help { width: 193px; margin: 0 6px 0 9px; padding-left: 2px; gap: 10px; }
.find { width: 18px; margin-left: 5px; }

/* Upper work area */
.upper { flex: 762 1 0; min-height: 0; display: grid; grid-template-columns: 320fr 1384fr 206fr; gap: 4px; padding: 0 1px; }
.tabs { display: flex; height: 27px; flex: none; white-space: nowrap; position: relative; }
.tab { display: flex; align-items: center; height: 26px; padding-top: 2px; color: var(--dim); }
.tab b { font-weight: 400; color: var(--blue); }
.tab.current { border-bottom: 2px solid #b5b0b5; padding-top: 4px; }
.swatch { width: 10px; height: 10px; margin: 0 8px 0 5px; flex: none; }
.red { background: #b5333a; }
.tan { background: #a8977a; }
.lockicon { margin-right: 5px; color: #b0b0b0; }
.overflow { margin-left: auto; padding-top: 2px; color: #b0b0b0; }
.effect-controls .tab.cut { width: 57px; justify-content: flex-start; padding-left: 2px; }
.effect-controls .tab.current .icon:last-child { margin-left: 6px; }
.effect-controls .tab .icon:first-child, .composition .tab .icon:first-child { margin-left: -4px; }
.effect-controls .tab.current { padding-left: 0; }
.effect-controls .swatch { margin-right: 7px; }
.effect-controls .overflow { margin-right: 1px; }
.crumb { height: 21px; padding: 3px 6px 1px; border-bottom: 1px solid #000; }

.composition .tab { padding-left: 9px; }
.composition .tab .icon:last-child { margin-left: 9px; }
.timeline .tab .icon:last-child { margin-left: 8px; }
.subtabs { display: flex; align-items: flex-start; height: 26px; margin-bottom: 1px; padding: 4px 20px 0; border-bottom: 1px solid #000; box-shadow: 0 1px #303032; }
.subtabs button { width: 104px; height: 17px; justify-content: flex-start; padding-left: 8px; background: #18181a; border: 1px solid #2e2e30; color: var(--blue); }
.viewer { flex: 1; min-height: 0; width: 100%; display: block; }
.outline { fill: none; stroke: #a03640; stroke-width: 2; }
.handles { fill: #c0343c; }
.motion { fill: none; stroke: #7a2430; }
.motion .dots { stroke: #b0606a; stroke-dasharray: 2 9; }
.motion .keys { fill: #3a0c12; stroke: #a85058; }
.anchorpoint { fill: none; stroke: #d9a3a8; stroke-width: 2; }
.view-footer { display: flex; align-items: center; height: 24px; flex: none; border-top: 1px solid #000; padding: 0 0 1px 1px; color: #a9a9a9; }
.mini { width: 22px; height: 18px; flex: none; }
.mini.on, .aligns .on, .dirs .on { background: #151517; }
.drop { position: relative; display: block; height: 18px; background: #19191b; border: 1px solid #2b2b2d; }
.drop::after { content: ""; position: absolute; right: 5px; top: 3px; width: 6px; height: 6px; border: solid #999; border-width: 0 1px 1px 0; transform: rotate(45deg); pointer-events: none; }
.drop select { appearance: none; display: block; width: 100%; height: 100%; padding-left: 6px; line-height: 14px; color: #b0b0b0; outline: 0; }
.w-zoom { width: 68px; }
.w-res { width: 85px; margin: 0 1px 0 2px; }
.w-cam { width: 105px; margin-left: 1px; }
.w-view { width: 68px; margin-left: 4px; }
.view-footer .w-zoom { margin-right: 1px; }
.timebox { width: 66px; height: 18px; margin: 0 2px 0 3px; border: 1px solid #2b2b2d; color: var(--dim); }

/* Right column */
.side { display: grid; grid-template-rows: 143px 56px 1fr; gap: 3px; min-height: 0; min-width: 0; }
.side .tab .icon { margin-left: 7px; margin-right: -3px; }
.side .tabs { padding-left: 11px; gap: 23px; }
.side .tab.current { padding: 4px 0 0 2px; }
.info .tab:first-child, .preview .tab, .effects .tab:first-child { color: #b5b0b5; }
.preview .tab { padding-left: 2px; }
.preview .tabs { height: 26px; }
.readout { display: flex; align-items: center; height: 64px; margin: 0 10px 0 8px; border-bottom: 1px solid #343436; color: var(--dim); line-height: 13px; }
.black { width: 20px; height: 20px; background: #000; margin-right: 7px; }
.readout dl { display: grid; grid-template: repeat(4, 13px) / 18px 1fr; align-content: center; width: 67px; }
.readout dl:first-of-type { border-right: 1px solid #343436; }
.readout dl:last-child { border: 0; padding-bottom: 2px; }
.cross { margin: 0 2px 0 6px; }
.summary { padding: 4px 8px; line-height: 14px; color: var(--dim); white-space: nowrap; }
.transport { display: flex; justify-content: center; gap: 8px; padding: 7px 4px 0 0; color: #b5b0b5; }
.effects { overflow: hidden; min-height: 0; }
.effects .overflow { position: absolute; right: 1px; top: 4px; }
.effects .field { margin: 5px 6px 2px; flex: none; }
.effects .tabs .tab:nth-child(2) { padding-top: 4px; }
.tree { list-style: none; flex: 1; min-height: 0; overflow: hidden; border-top: 1px solid #000; }
.tree li { display: flex; align-items: center; height: 17px; margin-right: 20px; border-bottom: 1px solid #1f1f20; }
.tree .icon { margin-right: 1px; }
.tree-footer { display: flex; justify-content: flex-end; height: 18px; flex: none; margin: 0 18px 0 1px; border: solid #000; border-width: 1px 1px 0 0; padding-right: 5px; color: #bdbdbd; }

/* Lower work area */
.lower { flex: 234 1 0; min-height: 0; display: grid; grid-template-columns: 1608fr 306fr; gap: 4px; margin-top: 4px; padding: 0 1px; }
.timeline { border: 1px solid #3c7ac8; border-bottom: 0; }
.timeline .tabs { height: 26px; }
.timeline .tab { padding: 0 0 0 4px; color: #b5b0b5; }
.timeline .swatch { margin: 0 12px 0 5px; }
.timeline .tab .icon:first-child { color: var(--text); }
.tl-body { flex: 1; min-height: 0; display: grid; grid-template-columns: 706px 1fr 17px; }
.layers, .tracks { display: flex; flex-direction: column; min-width: 0; min-height: 0; }
.tl-head { display: flex; align-items: center; height: 36px; flex: none; }
.clock { width: 106px; padding-left: 10px; display: flex; flex-direction: column; color: #2c5687; font-size: 10px; line-height: 12px; }
.clock strong { font-size: 16px; line-height: 18px; padding-left: 4px; color: var(--blue); }
.tl-head .field { width: 398px; }
.tl-tools { display: flex; margin-left: 17px; gap: 10px; color: #a9a9a9; }
.tl-tools button:first-child { margin-right: 7px; }
.tl-tools button:nth-child(2) { margin-right: 8px; }
.tl-tools button:last-child { margin-left: 8px; }

table { table-layout: fixed; width: 100%; border-collapse: collapse; flex: none; }
.c-av { width: 67px; } .c-label { width: 32px; } .c-num { width: 33px; } .c-name { width: 160px; }
.c-switch { width: 137px; } .c-mode { width: 68px; } .c-t { width: 17px; } .c-trk { width: 59px; } .c-parent { width: 117px; }
th, td { padding: 0; text-align: left; vertical-align: middle; font-weight: 400; white-space: nowrap; }
thead tr { height: 20px; background: #2e2d2f; box-shadow: inset 0 1px #000, inset 0 -1px #000; }
th { font-size: 9px; line-height: 12px; color: #a0a0a0; }
th.rule { background: linear-gradient(#0b0b0b, #0b0b0b) 0 4px / 1px 12px no-repeat; padding-left: 6px; }
.t-head { padding-left: 3px; }
th .slots { margin-left: -6px; }
th:first-child .slots { margin-left: 0; }
.label-head { display: flex; padding-left: 6px; }
.slots { display: flex; align-items: center; padding-left: 3px; }
.slots > * { width: 15px; flex: none; text-align: center; }
.slots em { font: italic 13px/14px "Liberation Serif", serif; }
.slots .cell { width: 13px; margin: 0 1px; }
.cell { display: block; width: 13px; height: 13px; background: #2b2a2c; }
.cell .icon { display: block; margin: -1px; width: 15px; height: 15px; }
tbody tr { height: 17px; background: #333234; box-shadow: inset 0 -1px #262627; }
tbody tr.chosen { background: #474647; }
.chosen .cell { background: #383739; }
.label-cell { display: flex; align-items: center; }
.label { width: 12px; height: 12px; background: #b5333a; margin-left: 2px; }
.num { padding-left: 8px; line-height: 15px; }
.name { display: flex; align-items: center; gap: 2px; height: 16px; }
.name .white { width: 14px; height: 14px; border: 1px solid #000; background: #fff; margin-left: 3px; }
.name span { flex: 1; line-height: 15px; padding: 0 0 1px 5px; color: #b0b0b0; }
.chosen .name span { background: #9f9a9f; color: #1c1c1d; }
td .drop { height: 15px; border: 0; }
td .drop select { line-height: 15px; }
td .drop::after { top: 3px; }
.w-mode { width: 58px; margin-left: 4px; }
.w-trk { width: 54px; margin-left: 1px; }
.parent { display: flex; align-items: center; gap: 5px; padding-left: 3px; }
.parent .drop { width: 89px; }
.tl-footer { display: flex; height: 15px; flex: none; margin-top: auto; border-top: 1px solid #000; align-items: center; }
.layers .tl-footer { padding-left: 3px; gap: 2px; }
.gray { color: #a9a9a9; }

.tracks { position: relative; overflow: hidden; border-left: 1px solid #000; }
.navigator { display: flex; height: 10px; margin: 6px 0 0 6px; flex: none; background: #000; }
.navigator .before { flex: 348; background: #3b3735; }
.navigator .range { flex: 514; background: linear-gradient(90deg, transparent 52%, #6c8fc0 52% 53%, transparent 53%), #656365; border: 1px solid #000; }
.knob { width: 7px; background: var(--blue); }
.knob.left { border-radius: 5px 0 0 5px; }
.knob.right { border-radius: 0 5px 5px 0; }
.ruler { display: flex; height: 20px; flex: none; margin-left: -11px; font-size: 10px; }
.ruler span { flex: 0 0 61px; display: flex; justify-content: center; line-height: 14px; background: linear-gradient(#888, #888) 50% 100% / 1px 5px no-repeat; }
.ruler .sec { background-size: 1px 7px; }
.workarea { display: flex; height: 16px; flex: none; border: solid #000; border-width: 1px 0; background: linear-gradient(90deg, transparent 99%, var(--blue) 99%); }
.workarea i, .cache i, .bar i { flex: 1; margin-right: 7px; }
.workarea i { background: #5f5d5f; }
.cache { display: flex; height: 4px; flex: none; border-bottom: 1px solid #000; background: #1c1415; }
.cache i { background: linear-gradient(90deg, transparent 31%, #33a834 31%); }
.bar { display: flex; height: 17px; flex: none; border-bottom: 1px solid #2c1517; background: #4a484a; }
.bar.two { background: #333234; }
.bar.one i { background: #aa454c; border-top: 1px solid #c98a8d; }
.bar.two i { background: #7b3639; }
.empty { flex: 1; display: flex; padding-right: 7px; }
.empty i { flex: 1; background: linear-gradient(90deg, transparent 460px, #4a4847 460px 472px, transparent 472px), #302f31; }
.zoomer { color: #bdbdbd; padding-left: 2px; }
.zoomer input { appearance: none; width: 44px; height: 12px; margin: 0 12px; background: linear-gradient(#3c3c3e, #3c3c3e) 0 50% / 100% 2px no-repeat; }
.zoomer input::-webkit-slider-thumb { appearance: none; width: 10px; height: 10px; border: 2px solid #aaa; border-radius: 50%; background: var(--panel); }
.scroll { flex: 1; align-self: stretch; margin-left: 7px; background: #19191b; display: flex; justify-content: flex-end; }
.scroll i { width: 59%; background: #2f2e30; border-radius: 7px; }
.playhead { position: absolute; top: 21px; bottom: 15px; left: 459px; width: 1px; background: var(--blue); }
.playhead svg { position: absolute; left: -6px; top: 0; width: 12px; height: 15px; }
.gutter { display: flex; flex-direction: column; gap: 4px; padding-top: 37px; color: #bdb8bd; }
.gutter .icon { margin-left: 1px; }

/* Paragraph */
.paragraph .tabs { padding-left: 13px; }
.paragraph .tab { color: #b5b0b5; gap: 8px; }
.aligns { display: flex; gap: 9px; margin: 0 0 0 6px; padding: 4px 0 5px; width: 182px; border-bottom: 1px solid #343436; }
.aligns div { display: flex; gap: 4px; }
.aligns button { width: 21px; height: 21px; }
.indents { display: grid; grid-template-columns: 72px 64px 64px; grid-auto-rows: 18px; padding: 2px 0 0 7px; color: var(--dim); }
.indents div { display: flex; gap: 4px; align-items: center; }
.indents b { font-weight: 400; color: var(--blue); }
.indents .dirs { gap: 3px; padding-top: 10px; }
.dirs button { width: 21px; height: 21px; }
```
